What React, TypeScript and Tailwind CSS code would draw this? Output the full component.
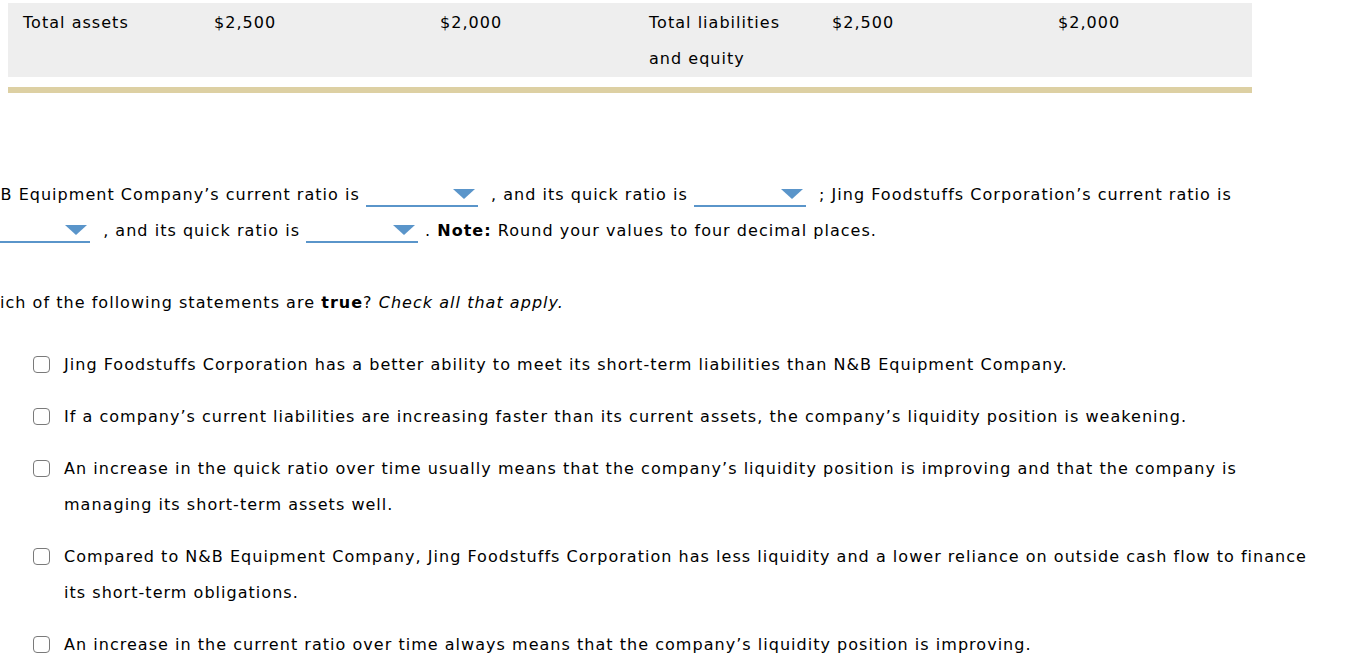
import React from "react";

const font = { fontFamily: '"DejaVu Sans", Verdana, sans-serif' };

function Dropdown({ first }: { first?: boolean }) {
  return (
    <span
      className={
        "relative inline-block w-[112px] h-[22px] align-[-7px] border-b-2 border-[#5a95ca] mr-[7px] " +
        (first ? "ml-[4px]" : "ml-[6px]")
      }
    >
      <svg
        className="absolute right-[3px] top-[4px]"
        width="22"
        height="10"
        viewBox="0 0 22 10"
      >
        <polygon points="0,0 22,0 11,10" fill="#5a95ca" />
      </svg>
    </span>
  );
}

function Checkbox() {
  return (
    <span className="shrink-0 mt-[9px] w-[17px] h-[17px] rounded-[4px] border border-[#7a7a7a] bg-white" />
  );
}

const items: React.ReactNode[][] = [
  ["Jing Foodstuffs Corporation has a better ability to meet its short-term liabilities than N&B Equipment Company."],
  ["If a company\u2019s current liabilities are increasing faster than its current assets, the company\u2019s liquidity position is weakening."],
  [
    "An increase in the quick ratio over time usually means that the company\u2019s liquidity position is improving and that the company is",
    "managing its short-term assets well.",
  ],
  [
    "Compared to N&B Equipment Company, Jing Foodstuffs Corporation has less liquidity and a lower reliance on outside cash flow to finance",
    "its short-term obligations.",
  ],
  ["An increase in the current ratio over time always means that the company\u2019s liquidity position is improving."],
];

export default function App() {
  return (
    <div
      className="w-[1371px] h-[671px] overflow-hidden bg-white text-[16px] tracking-[1.03px] text-black leading-[36px]"
      style={font}
    >
      <div className="pt-[3px] pl-[8px] w-[1252px]">
        <div className="bg-[#eeeeee] pl-[15px] pt-[2px] grid grid-cols-[191px_226px_209px_183px_226px_1fr]">
          <div>Total assets</div>
          <div>$2,500</div>
          <div>$2,000</div>
          <div>
            Total liabilities
            <br />
            and equity
          </div>
          <div>$2,500</div>
          <div>$2,000</div>
        </div>
        <div className="mt-[10px] h-[6px] bg-[#ddd0a3]" />
      </div>

      <div className="mt-[84px] ml-[-26px] whitespace-nowrap">
        <div>
          N&amp;B Equipment Company’s current ratio is
          <Dropdown />
          {" "}, and its quick ratio is
          <Dropdown />
          {" "}; Jing Foodstuffs Corporation’s current ratio is
        </div>
        <div>
          <Dropdown first />
          {" "}, and its quick ratio is
          <Dropdown />. <b>Note:</b> Round your values to four decimal places.
        </div>
      </div>

      <div className="mt-[36px] ml-[-28px] whitespace-nowrap">
        Which of the following statements are <b>true</b>? <i>Check all that apply.</i>
      </div>

      <div className="mt-[26px] pl-[33px] flex flex-col gap-[16px]">
        {items.map((lines, i) => (
          <div key={i} className="flex items-start gap-[14px]">
            <Checkbox />
            <div className="whitespace-nowrap">
              {lines.map((l, j) => (
                <div key={j}>{l}</div>
              ))}
            </div>
          </div>
        ))}
      </div>
    </div>
  );
}
